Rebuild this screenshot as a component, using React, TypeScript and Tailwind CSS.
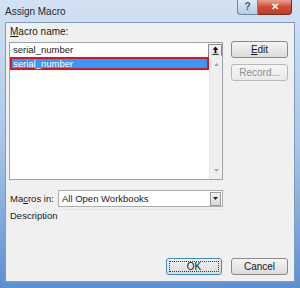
import React from "react";

const font = { fontFamily: '"Liberation Sans", Arial, sans-serif' };

function Btn({ children, className = "", disabled = false, focused = false }: { children: React.ReactNode; className?: string; disabled?: boolean; focused?: boolean }) {
  return (
    <div
      className={
        "flex items-center justify-center rounded-[3px] border text-[10px] leading-none " +
        (disabled
          ? "border-[#b5b9bc] bg-gradient-to-b from-[#f6f6f6] to-[#e9e9e9] text-[#8d8d8d] "
          : focused
          ? "border-[#3c8cc4] bg-gradient-to-b from-[#f2f2f2] to-[#dcdcdc] text-[#1a1a1a] "
          : "border-[#8a8a8a] bg-gradient-to-b from-[#f4f4f4] to-[#dcdcdc] text-[#1a1a1a] ") +
        className
      }
    >
      {focused ? (
        <div className="flex h-[calc(100%-4px)] w-[calc(100%-4px)] items-center justify-center border border-dotted border-[#333]">
          {children}
        </div>
      ) : (
        children
      )}
    </div>
  );
}

export default function App() {
  return (
    <div
      className="flex h-[288px] w-[300px] flex-col bg-gradient-to-b from-[#d3e2f3] via-[#a9c5e8] to-[#5d8fd0]"
      style={font}
    >
      {/* Title bar */}
      <div className="flex h-[22px] shrink-0 items-start">
        <div className="pl-[5px] pt-[6px] text-[10px] leading-[12px] text-[#1e2a38]">Assign Macro</div>
        <div className="ml-auto mr-[8px] flex h-[15px]">
          <div className="flex w-[21px] items-center justify-center rounded-bl-[4px] border border-t-0 border-[#6f86a3] bg-gradient-to-b from-[#e1ebf6] to-[#b6cbe3] text-[10px] font-bold leading-none text-[#3d5a80]">
            ?
          </div>
          <div className="flex w-[34px] items-center justify-center rounded-br-[4px] border border-l-0 border-t-0 border-[#7a2b22] bg-gradient-to-b from-[#e8a092] via-[#cf4a35] to-[#c23a28] text-[10px] font-bold leading-none text-white">
            ✕
          </div>
        </div>
      </div>

      {/* Client area */}
      <div className="mx-[5px] mb-[6px] flex flex-1 flex-col border border-[#7d9bc3] bg-[#f0f0f0] pb-[6px] pl-[3px] pr-[6px] text-[9.5px] text-[#1a1a1a]">
        <div className="flex">
          {/* Left column */}
          <div className="flex w-[214px] flex-col">
            <div className="h-[19px] whitespace-nowrap pt-[3px] pl-[1px] text-[10px] leading-[12px]">
              <span className="underline">M</span>acro name:
            </div>
            <div className="flex h-[138px] flex-col border border-[#9da1a7] bg-white">
              <div className="flex h-[13px] shrink-0 items-center">
                <div className="pl-[3px] pt-[1px] leading-none">serial_number</div>
                <div className="ml-auto mt-[1px] flex h-[13px] w-[14px] items-center justify-center border border-[#8a8a8a] bg-gradient-to-b from-[#f7f7f7] to-[#e2e2e2]">
                  <svg width="7" height="9" viewBox="0 0 7 9">
                    <path d="M3.5 0.5 L0.5 3.8 H2.6 V7 H4.4 V3.8 H6.5 Z" fill="#111" />
                    <rect x="0.5" y="7.8" width="6" height="1" fill="#111" />
                  </svg>
                </div>
              </div>
              <div className="flex flex-1">
                <div className="flex-1 pt-[1px]">
                  <div className="flex h-[13px] items-center border-2 border-[#e0141e] bg-[#3399ff] pl-[1px] leading-none text-white">
                    serial_number
                  </div>
                </div>
                <div className="flex w-[13px] flex-col items-center justify-between border-l border-[#e6e6e6] bg-[#efefef] py-[7px]">
                  <svg width="5" height="3" viewBox="0 0 5 3">
                    <path d="M2.5 0 L5 3 H0 Z" fill="#a9a9a9" />
                  </svg>
                  <svg width="5" height="3" viewBox="0 0 5 3">
                    <path d="M0 0 H5 L2.5 3 Z" fill="#a9a9a9" />
                  </svg>
                </div>
              </div>
            </div>

            <div className="mt-[10px] flex h-[17px] items-center">
              <div className="w-[49px] whitespace-nowrap pl-[1px] leading-none">
                Ma<span className="underline">c</span>ros in:
              </div>
              <div className="flex h-[17px] flex-1 items-center border border-[#a8abb0] bg-white">
                <div className="whitespace-nowrap pl-[3px] leading-none">All Open Workbooks</div>
                <div className="ml-auto mr-[1px] flex h-[14px] w-[11px] items-center justify-center border border-[#9a9a9a] bg-gradient-to-b from-[#f2f2f2] to-[#d8d8d8]">
                  <svg width="5" height="3" viewBox="0 0 5 3">
                    <path d="M0 0 H5 L2.5 3 Z" fill="#222" />
                  </svg>
                </div>
              </div>
            </div>

            <div className="mt-[2px] flex h-[14px] items-center">
              <div className="whitespace-nowrap pl-[1px] leading-none">Description</div>
              <div className="ml-[3px] h-px flex-1 self-start bg-[#e2e2e2]" />
            </div>
          </div>

          {/* Right column */}
          <div className="ml-[8px] flex w-[57px] flex-col pt-[18px]">
            <Btn className="h-[17px]">
              <span className="underline">E</span>dit
            </Btn>
            <Btn className="mt-[6px] h-[17px]" disabled>
              Record...
            </Btn>
          </div>
        </div>

        <div className="mt-auto flex justify-end gap-[9px]">
          <Btn className="h-[17px] w-[56px]" focused>
            OK
          </Btn>
          <Btn className="h-[17px] w-[57px]">Cancel</Btn>
        </div>
      </div>
    </div>
  );
}
